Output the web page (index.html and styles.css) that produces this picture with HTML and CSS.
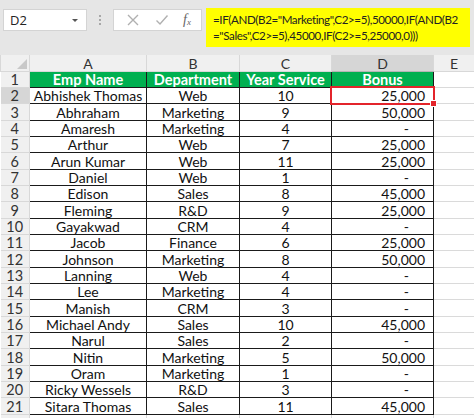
FILE: index.html
```html
<!DOCTYPE html>
<html>
<head>
<meta charset="utf-8">
<link rel="stylesheet" href="styles.css">
</head>
<body>
<div class="bar">
  <div class="namebox"><span>D2</span><span class="caret"></span></div>
  <div class="dots"><i></i><i></i><i></i></div>
  <div class="btns">
    <svg width="14" height="14" viewBox="0 0 14 14"><path d="M2 2 L12 12 M12 2 L2 12" stroke="#b0b0b0" stroke-width="1.4" fill="none"/></svg>
    <svg width="14" height="14" viewBox="0 0 14 14"><path d="M1.5 7.5 L5 11 L12.5 2.5" stroke="#b0b0b0" stroke-width="1.4" fill="none"/></svg>
    <span class="fx"><i>f</i><sub>x</sub></span>
  </div>
  <div class="formula">=IF(AND(B2="Marketing",C2&gt;=5),50000,IF(AND(B2<br>="Sales",C2&gt;=5),45000,IF(C2&gt;=5,25000,0)))</div>
</div>
<table class="sheet">
  <colgroup><col class="c0"><col class="ca"><col class="cb"><col class="cc"><col class="cd"><col class="ce"></colgroup>
  <tr class="colhead"><th class="corner"><span class="tri"></span></th><th>A</th><th>B</th><th>C</th><th class="selh">D</th><th>E</th></tr>
  <tr class="hdr"><th class="rn">1</th><td>Emp Name</td><td>Department</td><td>Year Service</td><td>Bonus</td><td class="e"></td></tr>
  <tr><th class="rn selh">2</th><td>Abhishek Thomas</td><td>Web</td><td>10</td><td class="num sel">25,000</td><td class="e"></td></tr>
  <tr><th class="rn">3</th><td>Abhraham</td><td>Marketing</td><td>9</td><td class="num">50,000</td><td class="e"></td></tr>
  <tr><th class="rn">4</th><td>Amaresh</td><td>Marketing</td><td>4</td><td class="num dash">-</td><td class="e"></td></tr>
  <tr><th class="rn">5</th><td>Arthur</td><td>Web</td><td>7</td><td class="num">25,000</td><td class="e"></td></tr>
  <tr><th class="rn">6</th><td>Arun Kumar</td><td>Web</td><td>11</td><td class="num">25,000</td><td class="e"></td></tr>
  <tr><th class="rn">7</th><td>Daniel</td><td>Web</td><td>1</td><td class="num dash">-</td><td class="e"></td></tr>
  <tr><th class="rn">8</th><td>Edison</td><td>Sales</td><td>8</td><td class="num">45,000</td><td class="e"></td></tr>
  <tr><th class="rn">9</th><td>Fleming</td><td>R&amp;D</td><td>9</td><td class="num">25,000</td><td class="e"></td></tr>
  <tr><th class="rn">10</th><td>Gayakwad</td><td>CRM</td><td>4</td><td class="num dash">-</td><td class="e"></td></tr>
  <tr><th class="rn">11</th><td>Jacob</td><td>Finance</td><td>6</td><td class="num">25,000</td><td class="e"></td></tr>
  <tr><th class="rn">12</th><td>Johnson</td><td>Marketing</td><td>8</td><td class="num">50,000</td><td class="e"></td></tr>
  <tr><th class="rn">13</th><td>Lanning</td><td>Web</td><td>4</td><td class="num dash">-</td><td class="e"></td></tr>
  <tr><th class="rn">14</th><td>Lee</td><td>Marketing</td><td>4</td><td class="num dash">-</td><td class="e"></td></tr>
  <tr><th class="rn">15</th><td>Manish</td><td>CRM</td><td>3</td><td class="num dash">-</td><td class="e"></td></tr>
  <tr><th class="rn">16</th><td>Michael Andy</td><td>Sales</td><td>10</td><td class="num">45,000</td><td class="e"></td></tr>
  <tr><th class="rn">17</th><td>Narul</td><td>Sales</td><td>2</td><td class="num dash">-</td><td class="e"></td></tr>
  <tr><th class="rn">18</th><td>Nitin</td><td>Marketing</td><td>5</td><td class="num">50,000</td><td class="e"></td></tr>
  <tr><th class="rn">19</th><td>Oram</td><td>Marketing</td><td>1</td><td class="num dash">-</td><td class="e"></td></tr>
  <tr><th class="rn">20</th><td>Ricky Wessels</td><td>R&amp;D</td><td>3</td><td class="num dash">-</td><td class="e"></td></tr>
  <tr><th class="rn">21</th><td>Sitara Thomas</td><td>Sales</td><td>11</td><td class="num">45,000</td><td class="e"></td></tr>
  <tr class="cut"><th class="rn"></th><td class="blank"></td><td class="blank"></td><td class="blank"></td><td class="blank"></td><td class="e"></td></tr>
</table>
</body>
</html>
```

FILE: styles.css
```css
html, body {
  margin: 0;
  padding: 0;
  background: #ffffff;
  overflow: hidden;
}
body {
  width: 474px;
  height: 418px;
  font-family: "Lato", "Liberation Sans", sans-serif;
}
.bar {
  height: 55px;
  background: #e6e6e6;
  display: flex;
  align-items: flex-start;
  padding: 8px 4px 0 3px;
  box-sizing: border-box;
}
.namebox {
  width: 84px;
  height: 22px;
  background: #fff;
  border: 1px solid #d4d4d4;
  box-sizing: border-box;
  display: flex;
  align-items: center;
  justify-content: space-between;
  padding: 0 8px 0 6px;
  font-family: "Open Sans", sans-serif;
  font-size: 13px;
  color: #222;
  margin-top: 1px;
}
.caret {
  width: 0;
  height: 0;
  border-left: 3px solid transparent;
  border-right: 3px solid transparent;
  border-top: 3px solid #555;
}
.dots {
  width: 26px;
  height: 22px;
  display: flex;
  flex-direction: column;
  align-items: center;
  justify-content: center;
  gap: 2px;
  margin-top: 1px;
}
.dots i {
  width: 2px;
  height: 2px;
  background: #a8a8a8;
}
.btns {
  width: 89px;
  height: 22px;
  background: #fff;
  border: 1px solid #d4d4d4;
  box-sizing: border-box;
  display: flex;
  align-items: center;
  justify-content: space-between;
  padding: 0 10px 0 12px;
  margin-top: 1px;
}
.fx {
  font-family: "Liberation Serif", serif;
  font-size: 14px;
  color: #666;
  line-height: 1;
}
.fx sub {
  font-size: 9px;
  vertical-align: -1px;
  font-style: italic;
}
.formula {
  flex: 1;
  margin-left: 4px;
  height: 39px;
  background: #ffff00;
  font-family: "Lato", sans-serif;
  font-size: 11.6px;
  letter-spacing: -0.4px;
  line-height: 16px;
  color: #222;
  padding: 4px 0 0 7px;
  box-sizing: border-box;
  white-space: nowrap;
  overflow: hidden;
}
.sheet {
  border-collapse: collapse;
  table-layout: fixed;
  width: 474px;
}
.c0 { width: 29px; }
.ca { width: 117px; }
.cb { width: 93px; }
.cc { width: 92px; }
.cd { width: 102px; }
.ce { width: 41px; }
.colhead th {
  height: 15px;
  padding: 0;
  background: #f0f0f0;
  border: 1px solid #d8d8d8;
  border-top: none;
  font-weight: normal;
  font-size: 14px;
  color: #333;
  line-height: 14px;
  vertical-align: bottom;
}
.colhead th.selh { background: #d6d6d6; border-bottom: 1px solid #b5b5b5; }
.corner { position: relative; }
.tri {
  position: absolute;
  right: 2px;
  bottom: 2px;
  width: 0;
  height: 0;
  border-left: 10px solid transparent;
  border-bottom: 10px solid #c8c8c8;
}
tr { height: 16.33px; }
td {
  padding: 0 3px;
  border: 1px solid #1a1a1a;
  font-size: 14px;
  line-height: 14px;
  color: #111;
  text-align: center;
  white-space: nowrap;
  overflow: hidden;
  vertical-align: bottom;
}
th.rn {
  padding: 0;
  background: #f0f0f0;
  border: 1px solid #d8d8d8;
  border-left: none;
  font-weight: normal;
  font-size: 14.5px;
  line-height: 14px;
  color: #333;
  text-align: center;
  vertical-align: bottom;
}
th.rn.selh { background: #d6d6d6; }
.hdr td {
  background: #00b050;
  color: #fff;
  font-weight: bold;
  font-size: 14.5px;
}
td.num { text-align: right; padding-right: 8px; }
td.dash { padding-right: 24px; }
td.e { border: 1px solid #dadada; border-left-color: #1a1a1a; }
.hdr td.e { background: #fff; }
td.sel { position: relative; overflow: visible; }
td.sel::after {
  content: "";
  position: absolute;
  left: -2px;
  top: -2px;
  right: -2px;
  bottom: -2px;
  border: 2px solid #e3242b;
}
td.sel::before {
  content: "";
  position: absolute;
  right: -4px;
  bottom: -4px;
  width: 5px;
  height: 5px;
  background: #e3242b;
  border: 1px solid #fff;
  z-index: 2;
}
tr.cut td.blank { border-bottom: none; border-left-color: #dadada; border-right-color: #dadada; }
tr.cut td.e { border-left-color: #dadada; }
```
